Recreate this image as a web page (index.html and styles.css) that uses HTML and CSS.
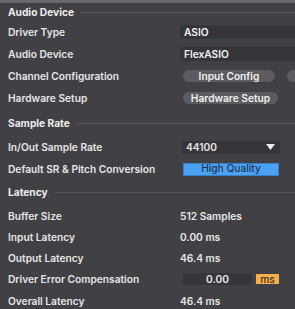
FILE: index.html
```html
<!DOCTYPE html>
<html>
<head>
<meta charset="utf-8">
<link rel="stylesheet" href="styles.css">
</head>
<body>
<div class="panel">
  <section class="section">
    <div class="heading heading-first"><span>Audio Device</span><i class="rule"></i></div>
    <div class="row"><span class="label">Driver Type</span><div class="value"><div class="field">ASIO</div></div></div>
    <div class="row"><span class="label">Audio Device</span><div class="value"><div class="field">FlexASIO</div></div></div>
    <div class="row"><span class="label">Channel Configuration</span><div class="value"><button class="pill pill-wide">Input Config</button><i class="pill pill-cut"></i></div></div>
    <div class="row"><span class="label">Hardware Setup</span><div class="value"><button class="pill pill-hw">Hardware Setup</button></div></div>
  </section>
  <section class="section">
    <div class="heading"><span>Sample Rate</span><i class="rule"></i></div>
    <div class="row"><span class="label">In/Out Sample Rate</span><div class="value"><div class="select"><span>44100</span><svg class="caret" width="9" height="6" viewBox="0 0 9 6"><path d="M0 0H9L4.5 6Z" fill="#ececec"/></svg></div></div></div>
    <div class="row"><span class="label">Default SR &amp; Pitch Conversion</span><div class="value"><div class="toggle"><span>High Quality</span></div></div></div>
  </section>
  <section class="section section-latency">
    <div class="heading"><span>Latency</span><i class="rule"></i></div>
    <div class="row"><span class="label">Buffer Size</span><div class="value"><span class="text">512 Samples</span></div></div>
    <div class="row"><span class="label">Input Latency</span><div class="value"><span class="text">0.00 ms</span></div></div>
    <div class="row"><span class="label">Output Latency</span><div class="value"><span class="text">46.4 ms</span></div></div>
    <div class="row"><span class="label">Driver Error Compensation</span><div class="value"><div class="numbox">0.00</div><div class="unit">ms</div></div></div>
    <div class="row"><span class="label">Overall Latency</span><div class="value"><span class="text">46.4 ms</span></div></div>
  </section>
</div>
</body>
</html>
```

FILE: styles.css
```css
html, body {
  margin: 0;
  padding: 0;
  background: #414045;
  overflow: hidden;
}
body {
  width: 295px;
  height: 309px;
  font-family: "Inter", "Liberation Sans", sans-serif;
  font-size: 10.2px;
  font-weight: 600;
  color: #e6e6e6;
}
.panel {
  border-top: 3px solid #68676c;
  display: flex;
  flex-direction: column;
}
.section {
  display: flex;
  flex-direction: column;
}
.section + .section {
  margin-top: 3px;
}
.section-latency {
  margin-top: 1px !important;
}
.heading {
  height: 22px;
  margin-bottom: 2px;
  display: flex;
  align-items: center;
  padding-left: 8px;
  gap: 6px;
}
.heading-first {
  height: 18px;
  margin-bottom: 0;
}
.heading span {
  font-weight: 700;
  color: #ececec;
}
.rule {
  flex: 1;
  height: 1px;
  background: #55545a;
}
.row {
  height: 22px;
  display: flex;
  align-items: center;
  padding-left: 8px;
}
.section-latency .row {
  height: 21.25px;
}
.label {
  width: 172px;
  flex: none;
  white-space: nowrap;
}
.value {
  flex: 1;
  display: flex;
  align-items: center;
  min-width: 0;
  white-space: nowrap;
}
.field {
  height: 14px;
  line-height: 14px;
  background: #36353a;
  padding-left: 4px;
  flex: 1;
  margin-right: -10px;
  color: #f0f0f0;
}
.pill {
  font: inherit;
  color: #f0f0f0;
  background: #5c5b60;
  border: none;
  border-radius: 6px;
  height: 12px;
  line-height: 12px;
  padding: 0;
  margin-left: 3px;
  flex: none;
  box-sizing: border-box;
  text-align: center;
}
.pill-wide {
  width: 92px;
}
.pill-hw {
  width: 95px;
}
.pill-cut {
  display: block;
  width: 40px;
  margin-left: 12px;
}
.select {
  width: 98px;
  height: 13px;
  line-height: 13px;
  background: #36353a;
  padding-left: 4px;
  box-sizing: border-box;
  display: flex;
  align-items: center;
  justify-content: space-between;
  padding-right: 5px;
  margin-left: 2px;
}
.caret { display: block; }
.toggle {
  width: 96px;
  height: 13px;
  box-sizing: border-box;
  margin-left: 3px;
  background: #4ca2f2;
  border: 1px solid #3a7fc4;
  color: #1f3652;
  font-weight: 500;
  display: flex;
  align-items: center;
  justify-content: center;
  line-height: 1;
  padding-bottom: 1px;
}
.numbox {
  width: 69px;
  height: 12px;
  line-height: 12px;
  background: #36353a;
  text-align: center;
  margin-left: 3px;
}
.unit {
  width: 23px;
  height: 10px;
  line-height: 10px;
  background: #f5b04a;
  color: #3a3020;
  text-align: center;
  font-weight: 500;
  margin-left: 4px;
}
```
